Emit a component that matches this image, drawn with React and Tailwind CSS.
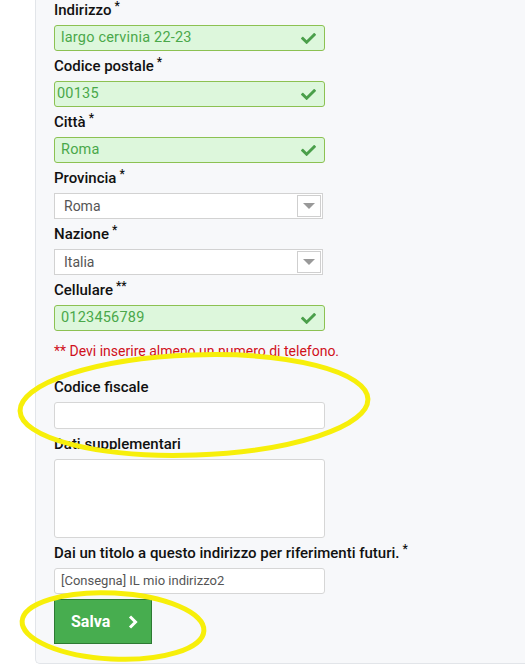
import React from "react";
import { FaCheck } from "react-icons/fa";

function Label({ text, req }) {
  return (
    <div className="h-[20px] leading-[20px] mb-[5px] text-[15px] font-medium text-[#111]">
      {text}
      {req && <sup className="ml-[3px] text-[12px] top-[-5px]">{req}</sup>}
    </div>
  );
}

function OkInput({ value, pl = "pl-[6px]" }) {
  return (
    <div className={`relative w-[271px] h-[26px] rounded-[3px] border border-[#8cc152] bg-[#ddf7dc] flex items-center ${pl}`}>
      <span className="text-[14.5px] text-[#4aa84a] tracking-[0.2px]">{value}</span>
      <FaCheck className="absolute right-[8px] top-[5px] text-[#4a9f4a]" size={15} />
    </div>
  );
}

function Select({ value }) {
  return (
    <div className="w-[269px] h-[26px] border border-[#d2d2d2] bg-white flex items-center justify-between pl-[9px] pr-[1px]">
      <span className="text-[14px] text-[#555]">{value}</span>
      <span className="w-[24px] h-[22px] border border-[#cfcfcf] flex items-center justify-center">
        <span className="w-0 h-0 border-l-[6px] border-r-[6px] border-t-[6px] border-l-transparent border-r-transparent border-t-[#999]" />
      </span>
    </div>
  );
}

function Field({ children }) {
  return <div className="flex flex-col">{children}</div>;
}

export default function App() {
  return (
    <div
      className="relative w-[525px] h-[666px] bg-white overflow-hidden"
      style={{ fontFamily: "Roboto, 'Liberation Sans', sans-serif" }}
    >
      <div className="ml-[35px] h-[664px] bg-[#f7f8fa] border-l border-b border-[#e2e5e9] rounded-bl-[5px] pl-[18px]">
        <div className="flex flex-col gap-[5px]">
          <Field>
            <Label text="Indirizzo" req="*" />
            <OkInput value="largo cervinia 22-23" />
          </Field>
          <Field>
            <Label text="Codice postale" req="*" />
            <OkInput value="00135" pl="pl-[2px]" />
          </Field>
          <Field>
            <Label text="Città" req="*" />
            <OkInput value="Roma" />
          </Field>
          <Field>
            <Label text="Provincia" req="*" />
            <Select value="Roma" />
          </Field>
          <Field>
            <Label text="Nazione" req="*" />
            <Select value="Italia" />
          </Field>
          <Field>
            <Label text="Cellulare" req="**" />
            <OkInput value="0123456789" />
          </Field>
        </div>

        <p className="mt-[10px] mb-[16px] leading-[20px] text-[14px] text-[#d0101b]">
          ** Devi inserire almeno un numero di telefono.
        </p>

        <div className="flex flex-col gap-[5px]">
          <Field>
            <Label text="Codice fiscale" />
            <div className="w-[271px] h-[27px] rounded-[3px] border border-[#d6d6d6] bg-white" />
          </Field>
          <Field>
            <Label text="Dati supplementari" />
            <div className="w-[271px] h-[79px] rounded-[3px] border border-[#d6d6d6] bg-white" />
          </Field>
          <Field>
            <Label text="Dai un titolo a questo indirizzo per riferimenti futuri." req="*" />
            <div className="w-[271px] h-[26px] rounded-[3px] border border-[#d6d6d6] bg-white flex items-center pl-[6px]">
              <span className="text-[13px] text-[#555]">[Consegna] IL mio indirizzo2</span>
            </div>
          </Field>
        </div>

        <button className="mt-[5px] w-[98px] h-[45px] bg-[#47ad4f] border border-[#2d7a33] flex items-center pl-[16px] gap-[18px] text-white text-[16px] font-bold">
          Salva
          <svg width="10" height="14" viewBox="0 0 10 14">
            <path d="M2 1.5 L7.5 7 L2 12.5" fill="none" stroke="white" strokeWidth="3" />
          </svg>
        </button>
      </div>

      <svg className="absolute inset-0 pointer-events-none" width="525" height="666">
        <ellipse cx="194" cy="405" rx="174" ry="50" fill="none" stroke="#f7ef0a" strokeWidth="5" transform="rotate(-2 194 405)" />
        <ellipse cx="113" cy="626" rx="91" ry="33" fill="none" stroke="#f7ef0a" strokeWidth="5" transform="rotate(3 113 626)" />
      </svg>
    </div>
  );
}
